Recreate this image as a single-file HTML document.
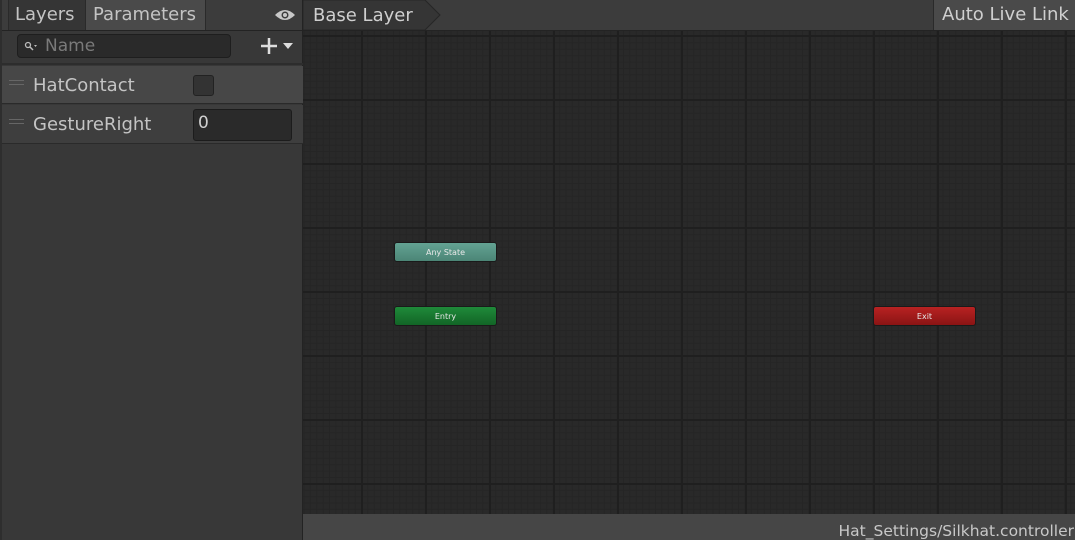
<!DOCTYPE html>
<html style="width:1075px;height:540px;overflow:hidden"><head><style>
*{margin:0;padding:0;box-sizing:border-box}
body{width:1075px;height:540px;background:#383838;font-family:"DejaVu Sans","Liberation Sans",sans-serif;color:#c4c4c4;position:relative;overflow:hidden}
.a{position:absolute}
.canvas{left:303px;top:31px;width:772px;height:483px;background-color:#292929;
background-image:
linear-gradient(90deg,#1f1f1f 2px,transparent 2px),
linear-gradient(0deg,#1f1f1f 2px,transparent 2px),
linear-gradient(90deg,#252525 1px,transparent 1px),
linear-gradient(0deg,#252525 1px,transparent 1px);
background-size:64px 64px,64px 64px,6.4px 6.4px,6.4px 6.4px;
background-position:58px 0,0 6px,58px 0,0 6px}
.node{position:absolute;width:103px;height:20px;border-radius:3px;font-size:8px;color:#e8e8e8;text-align:center;line-height:19px;border:1px solid #1a1a1a}
</style></head><body>
<div class="a" style="left:0;top:0;width:303px;height:31px;background:#3c3c3c;border-bottom:1px solid #232323"></div>
<div class="a" style="left:8px;top:0;width:78px;height:30px;background:#353535;border-right:1px solid #2a2a2a;border-left:1px solid #2a2a2a;font-size:18px;line-height:30px;padding-left:6px">Layers</div>
<div class="a" style="left:86px;top:0;width:120px;height:30px;background:#4a4a4a;border-right:1px solid #2a2a2a;font-size:18px;line-height:30px;padding-left:7px;white-space:nowrap">Parameters</div>
<svg class="a" style="left:274px;top:8px" width="22" height="14" viewBox="0 0 22 14"><path d="M1 7 Q11 -3 21 7 Q11 17 1 7Z" fill="#c8c8c8"/><circle cx="11" cy="7" r="3.5" fill="#3c3c3c"/><circle cx="11" cy="7" r="2" fill="#c8c8c8"/></svg>
<div class="a" style="left:302px;top:0;width:1px;height:540px;background:#232323"></div>
<div class="a" style="left:17px;top:34px;width:214px;height:24px;background:#2a2a2a;border:1px solid #1e1e1e;border-radius:4px;font-size:17px;line-height:22px;padding-left:27px;color:#7a7a7a">Name</div>
<svg class="a" style="left:24px;top:41px" width="14" height="10"><circle cx="4" cy="4" r="2.5" stroke="#bbb" stroke-width="1.3" fill="none"/><path d="M6 6 L9 9" stroke="#bbb" stroke-width="1.5"/><path d="M10 4 L13 4 L11.5 6Z" fill="#bbb"/></svg>
<svg class="a" style="left:258px;top:37px" width="40" height="18"><path d="M11 1 V17 M3 9 H19" stroke="#ddd" stroke-width="2.5"/><path d="M25 6 H35 L30 12Z" fill="#ddd"/></svg>
<div class="a" style="left:0;top:63px;width:303px;height:2px;background:#2d2d2d"></div>
<div class="a" style="left:2px;top:66px;width:301px;height:38px;background:#474747;border-bottom:1px solid #2a2a2a"></div>
<div class="a" style="left:9px;top:80px;width:15px;height:1px;background:#666"></div><div class="a" style="left:9px;top:84px;width:15px;height:1px;background:#666"></div>
<div class="a" style="left:33px;top:74px;font-size:18px;line-height:24px">HatContact</div>
<div class="a" style="left:193px;top:75px;width:21px;height:21px;background:#333;border:1px solid #222;border-radius:3px"></div>
<div class="a" style="left:2px;top:105px;width:301px;height:39px;background:#3e3e3e;border-bottom:1px solid #2a2a2a"></div>
<div class="a" style="left:9px;top:119px;width:15px;height:1px;background:#666"></div><div class="a" style="left:9px;top:123px;width:15px;height:1px;background:#666"></div>
<div class="a" style="left:33px;top:113px;font-size:18px;line-height:24px">GestureRight</div>
<div class="a" style="left:193px;top:109px;width:99px;height:32px;background:#2a2a2a;border:1px solid #1c1c1c;border-radius:3px;font-size:17px;line-height:26px;padding-left:4px;color:#d0d0d0">0</div>
<div class="a" style="left:0;top:0;width:2px;height:540px;background:#2e2e2e"></div>
<div class="a" style="left:303px;top:0;width:772px;height:31px;background:#3c3c3c;border-bottom:1px solid #232323"></div>
<svg class="a" style="left:303px;top:0" width="140" height="30"><path d="M0 0 H122 L137 15 L122 30 H0Z" fill="#353535" stroke="#262626"/></svg>
<div class="a" style="left:313px;top:4px;font-size:18px;line-height:24px;color:#cfcfcf">Base Layer</div>
<div class="a" style="left:933px;top:0;width:142px;height:30px;background:#4a4a4a;border-left:1px solid #2a2a2a;font-size:18px;line-height:30px;padding-left:8px;color:#cfcfcf;white-space:nowrap">Auto Live Link</div>
<div class="a canvas"></div>
<div class="node" style="left:394px;top:242px;background:linear-gradient(#63a393,#4b8576)">Any State</div>
<div class="node" style="left:394px;top:306px;background:linear-gradient(#1f8a3a,#126526)">Entry</div>
<div class="node" style="left:873px;top:306px;background:linear-gradient(#b82222,#8a1414)">Exit</div>
<div class="a" style="left:303px;top:514px;width:772px;height:26px;background:#464646;font-size:15.5px;line-height:34px;text-align:right;padding-right:1px;color:#c8c8c8;white-space:nowrap;overflow:hidden">Hat_Settings/Silkhat.controller</div>
</body></html>
